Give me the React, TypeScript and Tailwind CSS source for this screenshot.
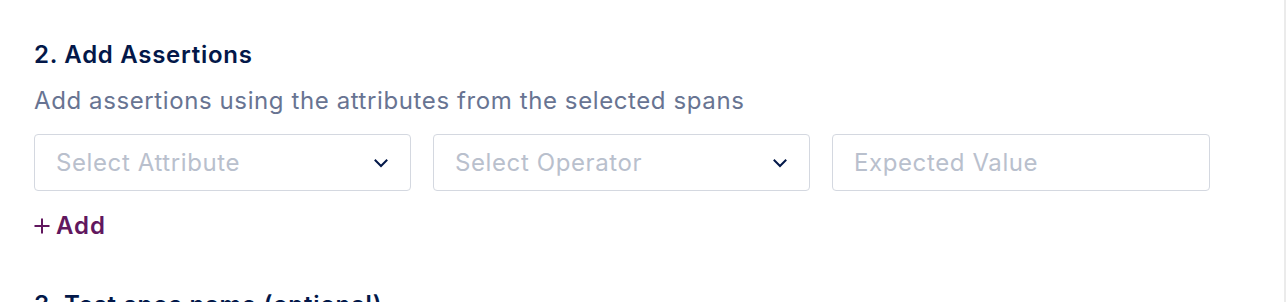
import React from "react";

function Chevron() {
  return (
    <svg width="16" height="16" viewBox="0 0 16 16" fill="none" className="shrink-0">
      <path d="M2.5 5.5L8 11L13.5 5.5" stroke="#031849" strokeWidth="2" strokeLinecap="square" />
    </svg>
  );
}

function SelectBox({ label }: { label: string }) {
  return (
    <div className="flex h-[57px] w-[377px] items-center justify-between rounded-[4px] border border-[#d4d8e0] bg-white pl-[21px] pr-[21px]">
      <span className="text-[24px] tracking-[0.025em] text-[#b9c0cd]">{label}</span>
      <Chevron />
    </div>
  );
}

export default function App() {
  return (
    <div className="flex h-[302px] w-[1288px] overflow-hidden bg-white" style={{ fontFamily: "Inter, 'Noto Sans', sans-serif" }}>
      <div className="flex-1 pl-[34px] pt-[40px]">
        <h2 className="text-[24px] font-semibold leading-[30px] tracking-[0.03em] text-[#031849]">2. Add Assertions</h2>
        <p className="mt-[16px] text-[24px] leading-[30px] tracking-[0.025em] text-[#687492]">
          Add assertions using the attributes from the selected spans
        </p>
        <div className="mt-[18px] flex gap-[22px]">
          <SelectBox label="Select Attribute" />
          <SelectBox label="Select Operator" />
          <div className="flex h-[57px] w-[378px] items-center rounded-[4px] border border-[#d4d8e0] bg-white pl-[21px]">
            <span className="text-[24px] tracking-[0.025em] text-[#b9c0cd]">Expected Value</span>
          </div>
        </div>
        <div className="mt-[20px] flex items-center gap-[6px] text-[24px] font-semibold leading-[30px] tracking-[0.04em] text-[#61175e]">
          <svg width="16" height="16" viewBox="0 0 16 16" className="shrink-0">
            <path d="M8 0.5V15.5M0.5 8H15.5" stroke="#61175e" strokeWidth="2" />
          </svg>
          <span>Add</span>
        </div>
        <h2 className="mt-[49px] whitespace-nowrap text-[24px] font-semibold leading-[30px] tracking-[0.03em] text-[#031849]">3. Test spec name (optional)</h2>
      </div>
      <div className="w-[4px] shrink-0 bg-white">
        <div className="h-full w-[2px] bg-[#ebebeb]" />
      </div>
    </div>
  );
}
